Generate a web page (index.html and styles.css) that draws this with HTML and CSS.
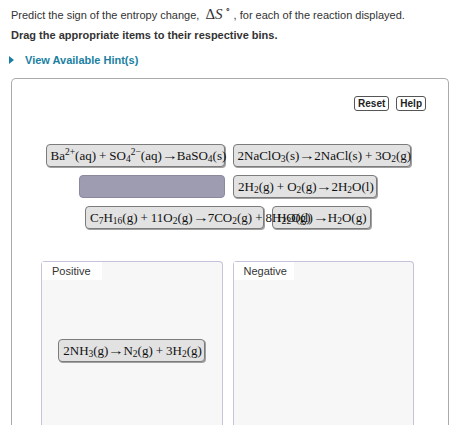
FILE: index.html
```html
<!DOCTYPE html>
<html>
<head>
<meta charset="utf-8">
<link rel="stylesheet" href="styles.css">
</head>
<body>
<div class="prompt">
  <p class="question">Predict the sign of the entropy change, <span class="mathq"><span class="up">Δ</span><i>S</i><sup class="deg">∘</sup></span> , for each of the reaction displayed.</p>
  <p class="instr">Drag the appropriate items to their respective bins.</p>
  <div class="hint"><span class="tri"></span>View Available Hint(s)</div>
</div>
<div class="panel">
  <div class="toolbar">
    <button class="btn">Reset</button>
    <button class="btn">Help</button>
  </div>
  <div class="pool">
    <div class="row">
      <div class="tile w-ba"><span class="eq">Ba<sup>2+</sup>(aq)<span class="op">+</span>SO<sub>4</sub><sup>2−</sup>(aq)<span class="arr">→</span>BaSO<sub>4</sub>(s)</span></div>
      <div class="tile w-na"><span class="eq">2NaClO<sub>3</sub>(s)<span class="arr">→</span>2NaCl(s)<span class="op">+</span>3O<sub>2</sub>(g)</span></div>
    </div>
    <div class="row">
      <div class="slot"></div>
      <div class="tile w-h2"><span class="eq">2H<sub>2</sub>(g)<span class="op">+</span>O<sub>2</sub>(g)<span class="arr">→</span>2H<sub>2</sub>O(l)</span></div>
    </div>
    <div class="row">
      <div class="tile w-c7 front"><span class="eq">C<sub>7</sub>H<sub>16</sub>(g)<span class="op">+</span>11O<sub>2</sub>(g)<span class="arr">→</span>7CO<sub>2</sub>(g)<span class="op">+</span>8H<sub>2</sub>O(g)</span></div>
      <div class="tile w-h2o"><span class="eq">H<sub>2</sub>O(l)<span class="arr">→</span>H<sub>2</sub>O(g)</span></div>
    </div>
  </div>
  <div class="bins">
    <div class="bin">
      <div class="bin-label">Positive</div>
      <div class="bin-body">
        <div class="tile w-nh"><span class="eq">2NH<sub>3</sub>(g)<span class="arr">→</span>N<sub>2</sub>(g)<span class="op">+</span>3H<sub>2</sub>(g)</span></div>
      </div>
    </div>
    <div class="bin">
      <div class="bin-label">Negative</div>
      <div class="bin-body"></div>
    </div>
  </div>
</div>
</body>
</html>
```
FILE: styles.css
```css
html, body {
  margin: 0;
  padding: 0;
  background: #ffffff;
}
body {
  font-family: "Liberation Sans", Arial, sans-serif;
  color: #333333;
  width: 458px;
  height: 425px;
  overflow: hidden;
}
.prompt {
  padding: 0 0 0 11px;
}
.question {
  margin: 0;
  padding-top: 6px;
  font-size: 11px;
  line-height: 16px;
}
.mathq {
  font-family: "Liberation Serif", "Times New Roman", serif;
  font-size: 15px;
  margin-left: 3px;
}
.mathq i {
  font-style: italic;
}
.deg {
  font-size: 9px;
  vertical-align: 6px;
  line-height: 0;
  margin-left: 2px;
}
.instr {
  margin: 4px 0 0 0;
  font-size: 11px;
  line-height: 16px;
  font-weight: bold;
}
.hint {
  margin-top: 10px;
  display: flex;
  align-items: center;
  font-size: 11px;
  line-height: 14px;
  font-weight: bold;
  color: #1a7fa3;
}
.tri {
  width: 0;
  height: 0;
  border-left: 5px solid #1a7fa3;
  border-top: 4px solid transparent;
  border-bottom: 4px solid transparent;
  margin-left: -2px;
  margin-right: 11px;
}
.panel {
  margin: 11px 0 0 11px;
  width: 438px;
  height: 400px;
  box-sizing: border-box;
  border: 1px solid #aaaaaa;
  border-bottom: none;
  border-radius: 5px 5px 0 0;
}
.toolbar {
  display: flex;
  justify-content: flex-end;
  gap: 7px;
  padding: 17px 22px 0 0;
}
.btn {
  font-family: "Liberation Sans", Arial, sans-serif;
  font-weight: bold;
  font-size: 10px;
  color: #222222;
  background: #ffffff;
  border: 1px solid #555555;
  border-radius: 3px;
  height: 15px;
  padding: 0 3px;
  line-height: 13px;
}
.pool {
  padding: 33px 33px 0 29px;
  display: flex;
  flex-direction: column;
  gap: 8px;
}
.row {
  display: flex;
  justify-content: center;
  gap: 8px;
}
.tile {
  position: relative;
  box-sizing: border-box;
  height: 23px;
  padding-left: 4px;
  white-space: nowrap;
  font-family: "Liberation Serif", "Times New Roman", serif;
  font-size: 13px;
  line-height: 21px;
  color: #111111;
  background: #e2e2e2;
  border: 1px solid #7c7c7c;
  border-radius: 4px;
  box-shadow: 1px 1px 0 #a0a0a0;
}
.tile.front {
  z-index: 1;
}
.eq {
  display: inline-block;
  white-space: nowrap;
}
.tile sub, .tile sup {
  font-size: 9.5px;
  line-height: 0;
}
.tile sub {
  vertical-align: -2px;
}
.tile sup {
  vertical-align: 5px;
}
.op {
  margin: 0 3px;
}
.arr {
  display: inline-block;
  transform: scaleX(1.25);
  margin: 0 1px;
}
.w-ba { width: 179px; }
.w-na { width: 178px; }
.w-h2 { width: 144px; }
.w-c7 { width: 179px; }
.w-h2o { width: 99px; }
.w-nh { width: 147px; }
.slot {
  box-sizing: border-box;
  width: 146px;
  height: 23px;
  background: #9e9cb0;
  border: 1px solid #8c899f;
  border-radius: 4px;
}
.bins {
  display: flex;
  gap: 10px;
  padding: 32px 34px 0 29px;
}
.bin {
  box-sizing: border-box;
  width: 182px;
  height: 200px;
  background: #f7f7f7;
  border: 1px solid #c5c2dc;
  border-bottom: none;
  border-radius: 4px 4px 0 0;
}
.bin-label {
  display: inline-block;
  background: #ffffff;
  font-size: 11px;
  line-height: 18px;
  height: 18px;
  padding: 0 10px 0 10px;
  width: 40px;
  color: #333333;
  vertical-align: top;
}
.bin-body {
  display: flex;
  justify-content: center;
  padding-top: 59px;
}
```
